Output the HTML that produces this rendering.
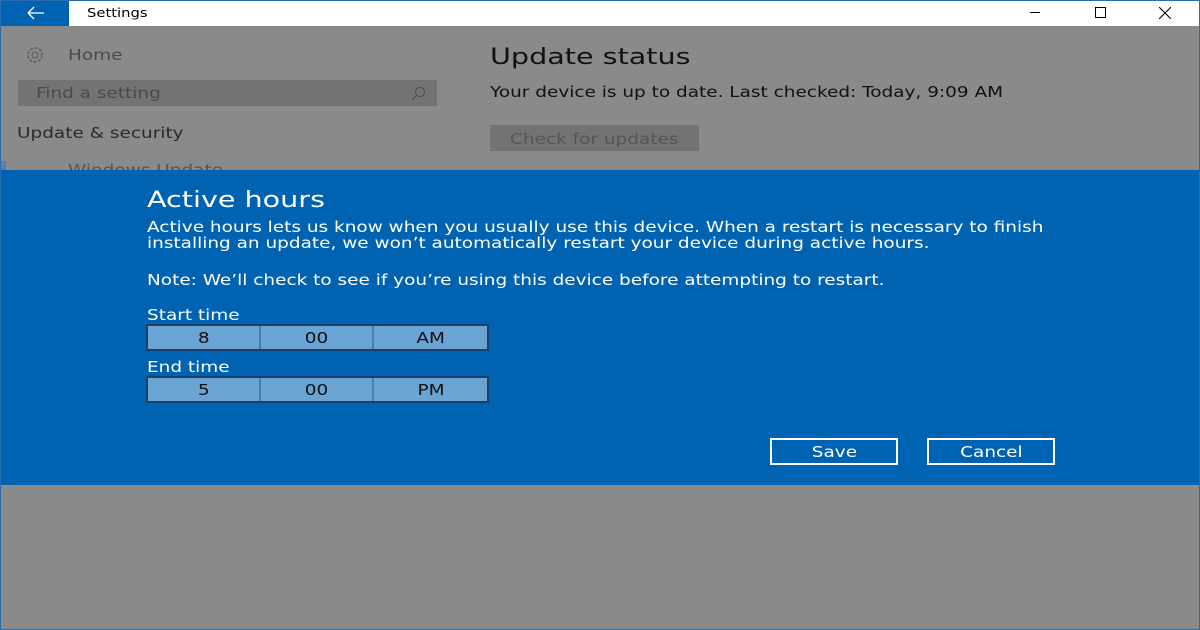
<!DOCTYPE html>
<html><head><meta charset="utf-8"><style>
*{margin:0;padding:0;box-sizing:border-box}
body{width:1200px;height:630px;overflow:hidden;background:#8a8a8a;font-family:"DejaVu Sans","Liberation Sans",sans-serif;position:relative}
.a{position:absolute;white-space:nowrap}
.t{transform:scaleX(1.23);transform-origin:0 0}
.h{transform:scaleX(1.3);transform-origin:0 0}
.c{display:inline-block;transform:scaleX(1.23)}
#frame{position:absolute;left:0;top:0;width:1200px;height:630px;border:1px solid #2b6cb0;pointer-events:none}
</style></head><body>
<div class="a" style="left:0;top:0;width:1200px;height:26px;background:#fff"></div>
<div class="a" style="left:0;top:0;width:69px;height:26px;background:#0063b1"></div>
<svg class="a" style="left:26px;top:6px" width="20" height="14"><path d="M2 7H18M2 7L8 1M2 7L8 13" stroke="#fff" stroke-width="1.3" fill="none"/></svg>
<div class="a t" style="left:87px;top:6px;font-size:12px;color:#000">Settings</div>
<div class="a" style="left:1030px;top:12px;width:10px;height:1px;background:#000"></div>
<div class="a" style="left:1095px;top:7px;width:11px;height:11px;border:1px solid #000"></div>
<svg class="a" style="left:1159px;top:7px" width="12" height="12"><path d="M0 0L12 12M12 0L0 12" stroke="#000" stroke-width="1.1"/></svg>

<svg class="a" style="left:23px;top:45px" width="24" height="20"><circle cx="12" cy="10" r="7" stroke="#555" fill="none" stroke-width="1.2" stroke-dasharray="3 1.6"/><circle cx="12" cy="10" r="3" stroke="#555" fill="none"/></svg>
<div class="a t" style="left:68px;top:46px;font-size:15px;color:#4a4a4a">Home</div>
<div class="a" style="left:18px;top:80px;width:419px;height:26px;background:#737373"></div>
<div class="a t" style="left:36px;top:84px;font-size:15px;color:#4a4a4a">Find a setting</div>
<svg class="a" style="left:409px;top:85px" width="18" height="16"><circle cx="11" cy="7" r="4.5" stroke="#4a4a4a" fill="none"/><path d="M8 10L3 15" stroke="#4a4a4a"/></svg>
<div class="a t" style="left:17px;top:124px;font-size:15px;color:#2a2a2a">Update &amp; security</div>
<div class="a" style="left:0;top:161px;width:6px;height:9px;background:#5a7fa8"></div>
<div class="a t" style="left:68px;top:161px;font-size:15px;color:#555;height:9px;overflow:hidden">Windows Update</div>

<div class="a h" style="left:490px;top:45px;font-size:22px;color:#111">Update status</div>
<div class="a t" style="left:490px;top:83px;font-size:15px;color:#111">Your device is up to date. Last checked: Today, 9:09 AM</div>
<div class="a" style="left:490px;top:125px;width:209px;height:26px;background:#737373"></div>
<div class="a t" style="left:510px;top:130px;font-size:15px;color:#555">Check for updates</div>

<div class="a" style="left:0;top:170px;width:1200px;height:315px;background:#0063b1"></div>
<div class="a h" style="left:147px;top:188px;font-size:22px;color:#fff">Active hours</div>
<div class="a t" style="left:147px;top:219px;font-size:15px;color:#fff;line-height:16px">Active hours lets us know when you usually use this device. When a restart is necessary to finish<br>installing an update, we won’t automatically restart your device during active hours.</div>
<div class="a t" style="left:147px;top:271px;font-size:15px;color:#fff">Note: We’ll check to see if you’re using this device before attempting to restart.</div>

<div class="a t" style="left:147px;top:306px;font-size:15px;color:#fff">Start time</div>
<div class="a" style="left:146px;top:324px;width:343px;height:27px;background:#1b3f66;padding:2px"><div style="display:flex;height:23px;background:#6aa4d4;color:#111;font-size:15px;line-height:24px;text-align:center">
<div style="width:113px;border-right:2px solid #4a7eaa"><span class="c">8</span></div><div style="width:113px;border-right:2px solid #4a7eaa"><span class="c">00</span></div><div style="flex:1"><span class="c">AM</span></div></div></div>
<div class="a t" style="left:147px;top:358px;font-size:15px;color:#fff">End time</div>
<div class="a" style="left:146px;top:376px;width:343px;height:27px;background:#1b3f66;padding:2px"><div style="display:flex;height:23px;background:#6aa4d4;color:#111;font-size:15px;line-height:24px;text-align:center">
<div style="width:113px;border-right:2px solid #4a7eaa"><span class="c">5</span></div><div style="width:113px;border-right:2px solid #4a7eaa"><span class="c">00</span></div><div style="flex:1"><span class="c">PM</span></div></div></div>

<div class="a" style="left:770px;top:438px;width:128px;height:27px;border:2px solid #fff;color:#fff;font-size:15px;text-align:center;line-height:25px"><span class="c">Save</span></div>
<div class="a" style="left:927px;top:438px;width:128px;height:27px;border:2px solid #fff;color:#fff;font-size:15px;text-align:center;line-height:25px"><span class="c">Cancel</span></div>
<div id="frame"></div>
</body></html>
